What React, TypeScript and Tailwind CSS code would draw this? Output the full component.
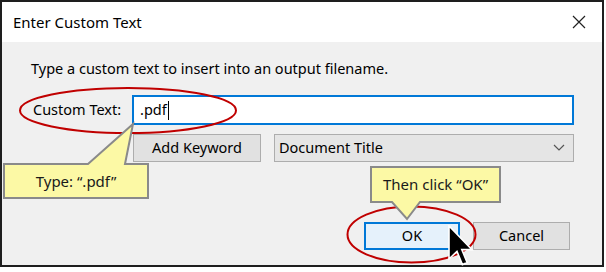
const Callout = ({
  box,
  tail,
  text,
}: {
  box: { x: number; y: number; w: number; h: number };
  tail: [number, number][];
  text: string;
}) => {
  const { x, y, w, h } = box;
  // outline polygon: box with a tail inserted on top or bottom edge
  const [a, tip, b] = tail;
  const onTop = tip[1] < y;
  const pts = onTop
    ? [[x, y], [a[0], y], tip, [b[0], y], [x + w, y], [x + w, y + h], [x, y + h]]
    : [[x, y], [x + w, y], [x + w, y + h], [b[0], y + h], tip, [a[0], y + h], [x, y + h]];
  return (
    <>
      <svg className="absolute left-0 top-0 pointer-events-none" width={606} height={272}>
        <polygon
          points={pts.map((p) => p.join(',')).join(' ')}
          fill="#fcf9a5"
          stroke="#8a8a8a"
          strokeWidth={2}
          strokeLinejoin="miter"
        />
      </svg>
      <div
        className="absolute flex items-center justify-center text-[15px] text-[#1a1a1a] pointer-events-none"
        style={{ left: x, top: y, width: w, height: h }}
      >
        {text}
      </div>
    </>
  );
};

const App = () => {
  return (
    <div className="relative w-[606px] h-[272px] bg-white overflow-hidden font-['Noto_Sans',sans-serif]">
      {/* Dialog window */}
      <div className="w-[604px] h-[267px] border-2 border-[#1e1e1e] flex flex-col">
        {/* Title bar */}
        <div className="h-[40px] bg-white flex items-center justify-between pl-[11px] pr-[16px] shrink-0">
          <span className="text-[15px] text-black">Enter Custom Text</span>
          <svg width="14" height="14" viewBox="0 0 14 14">
            <path d="M1 1 L13 13 M13 1 L1 13" stroke="#222" strokeWidth="1.2" />
          </svg>
        </div>

        {/* Body */}
        <div className="flex-1 bg-[#f0f0f0] flex flex-col pl-[29px] pt-[16px] text-[14.5px]">
          <p className="leading-[20px] text-black">
            Type a custom text to insert into an output filename.
          </p>

          <div className="flex items-center mt-[17px]">
            <label className="w-[101px] text-black pl-[2px]">Custom Text:</label>
            <div className="w-[442px] h-[30px] border-[2px] border-[#0078d7] bg-white flex items-center pl-[6px]">
              <span className="text-black">.pdf</span>
              <span className="w-[1px] h-[19px] bg-black ml-[1px]" />
            </div>
          </div>

          <div className="flex items-center mt-[9px] pl-[102px] gap-[13px]">
            <button className="w-[128px] h-[28px] border border-[#adadad] bg-[#e1e1e1] text-black">
              Add Keyword
            </button>
            <div className="w-[300px] h-[28px] border border-[#adadad] bg-[#e5e5e5] flex items-center justify-between pl-[4px] pr-[8px]">
              <span className="text-black">Document Title</span>
              <svg width="12" height="8" viewBox="0 0 12 8">
                <path d="M1 1 L6 6 L11 1" fill="none" stroke="#555" strokeWidth="1.2" />
              </svg>
            </div>
          </div>

          <div className="flex items-center mt-[60px] pl-[333px] gap-[13px]">
            <button className="w-[96px] h-[28px] border-2 border-[#0078d7] bg-[#e5f1fb] text-black">
              OK
            </button>
            <button className="w-[97px] h-[28px] border border-[#adadad] bg-[#e1e1e1] text-black">
              Cancel
            </button>
          </div>
        </div>
      </div>

      {/* Red highlight ellipses */}
      <svg className="absolute left-0 top-0 pointer-events-none" width={606} height={272}>
        <ellipse cx={128} cy={110.5} rx={108} ry={22.5} fill="none" stroke="#c00000" strokeWidth={2} />
        <ellipse cx={411.5} cy={234.5} rx={64} ry={28} fill="none" stroke="#c00000" strokeWidth={2} />
      </svg>

      {/* Callouts */}
      <Callout
        box={{ x: 4, y: 164, w: 144, h: 34 }}
        tail={[[88, 164], [133, 124], [125, 164]]}
        text="Type: “.pdf”"
      />
      <Callout
        box={{ x: 371, y: 167, w: 129, h: 35 }}
        tail={[[392, 202], [407, 219], [420, 202]]}
        text="Then click “OK”"
      />

      {/* Mouse cursor */}
      <svg className="absolute left-[448px] top-[225px] pointer-events-none" width="26" height="42" viewBox="0 0 13 21">
        <path
          d="M0.5 0.5 L0.5 17 L4.5 13.2 L7.2 19.8 L9.6 18.8 L6.9 12.3 L12 12.3 Z"
          fill="#000"
          stroke="#fff"
          strokeWidth="0.8"
          strokeLinejoin="miter"
        />
      </svg>
    </div>
  );
};

export default App;
